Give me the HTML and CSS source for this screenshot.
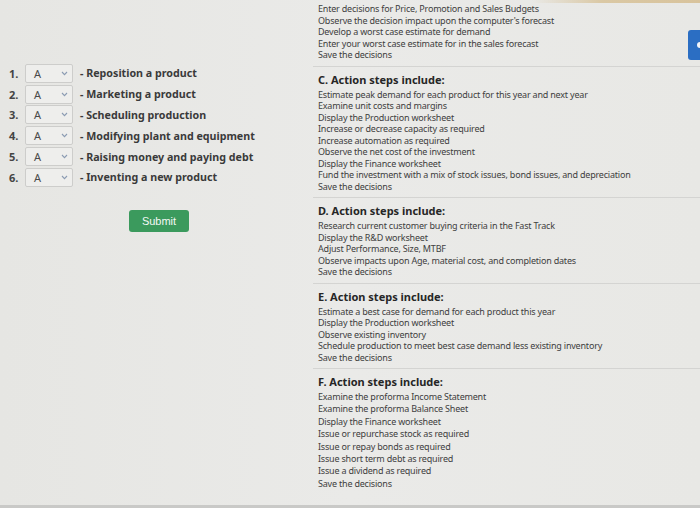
FILE: index.html
```html
<!DOCTYPE html>
<html lang="en">
<head>
<meta charset="utf-8">
<title>Action steps</title>
<link rel="stylesheet" href="styles.css">
</head>
<body>
<div class="page">
  <div class="top-strip"></div>
  <div class="main">
    <div class="left">
      <div class="rows">
        <div class="row"><span class="num">1.</span><span class="select"><span class="val">A</span><svg class="chev" width="7" height="5" viewBox="0 0 7 5"><path d="M1 1 L3.5 3.6 L6 1" fill="none" stroke="#8b9bb2" stroke-width="1.1"/></svg></span><span class="label">- Reposition a product</span></div>
        <div class="row"><span class="num">2.</span><span class="select"><span class="val">A</span><svg class="chev" width="7" height="5" viewBox="0 0 7 5"><path d="M1 1 L3.5 3.6 L6 1" fill="none" stroke="#8b9bb2" stroke-width="1.1"/></svg></span><span class="label">- Marketing a product</span></div>
        <div class="row"><span class="num">3.</span><span class="select"><span class="val">A</span><svg class="chev" width="7" height="5" viewBox="0 0 7 5"><path d="M1 1 L3.5 3.6 L6 1" fill="none" stroke="#8b9bb2" stroke-width="1.1"/></svg></span><span class="label">- Scheduling production</span></div>
        <div class="row"><span class="num">4.</span><span class="select"><span class="val">A</span><svg class="chev" width="7" height="5" viewBox="0 0 7 5"><path d="M1 1 L3.5 3.6 L6 1" fill="none" stroke="#8b9bb2" stroke-width="1.1"/></svg></span><span class="label">- Modifying plant and equipment</span></div>
        <div class="row"><span class="num">5.</span><span class="select"><span class="val">A</span><svg class="chev" width="7" height="5" viewBox="0 0 7 5"><path d="M1 1 L3.5 3.6 L6 1" fill="none" stroke="#8b9bb2" stroke-width="1.1"/></svg></span><span class="label">- Raising money and paying debt</span></div>
        <div class="row"><span class="num">6.</span><span class="select"><span class="val">A</span><svg class="chev" width="7" height="5" viewBox="0 0 7 5"><path d="M1 1 L3.5 3.6 L6 1" fill="none" stroke="#8b9bb2" stroke-width="1.1"/></svg></span><span class="label">- Inventing a new product</span></div>
      </div>
      <button class="submit" type="button">Submit</button>
    </div>
    <div class="right">
      <div class="section first">
        <div class="line">Enter decisions for Price, Promotion and Sales Budgets</div>
        <div class="line">Observe the decision impact upon the computer's forecast</div>
        <div class="line">Develop a worst case estimate for demand</div>
        <div class="line">Enter your worst case estimate for in the sales forecast</div>
        <div class="line">Save the decisions</div>
      </div>
      <div class="section">
        <div class="heading">C. Action steps include:</div>
        <div class="line">Estimate peak demand for each product for this year and next year</div>
        <div class="line">Examine unit costs and margins</div>
        <div class="line">Display the Production worksheet</div>
        <div class="line">Increase or decrease capacity as required</div>
        <div class="line">Increase automation as required</div>
        <div class="line">Observe the net cost of the investment</div>
        <div class="line">Display the Finance worksheet</div>
        <div class="line">Fund the investment with a mix of stock issues, bond issues, and depreciation</div>
        <div class="line">Save the decisions</div>
      </div>
      <div class="section">
        <div class="heading">D. Action steps include:</div>
        <div class="line">Research current customer buying criteria in the Fast Track</div>
        <div class="line">Display the R&amp;D worksheet</div>
        <div class="line">Adjust Performance, Size, MTBF</div>
        <div class="line">Observe impacts upon Age, material cost, and completion dates</div>
        <div class="line">Save the decisions</div>
      </div>
      <div class="section">
        <div class="heading">E. Action steps include:</div>
        <div class="line">Estimate a best case for demand for each product this year</div>
        <div class="line">Display the Production worksheet</div>
        <div class="line">Observe existing inventory</div>
        <div class="line">Schedule production to meet best case demand less existing inventory</div>
        <div class="line">Save the decisions</div>
      </div>
      <div class="section last">
        <div class="heading">F. Action steps include:</div>
        <div class="line">Examine the proforma Income Statement</div>
        <div class="line">Examine the proforma Balance Sheet</div>
        <div class="line">Display the Finance worksheet</div>
        <div class="line">Issue or repurchase stock as required</div>
        <div class="line">Issue or repay bonds as required</div>
        <div class="line">Issue short term debt as required</div>
        <div class="line">Issue a dividend as required</div>
        <div class="line">Save the decisions</div>
      </div>
    </div>
  </div>
  <div class="bottom-strip"></div>
  <div class="edge-tab"><span class="edge-dot"></span></div>
</div>
</body>
</html>
```
FILE: styles.css
```css
html, body {
  margin: 0;
  padding: 0;
}
body {
  background: #e8e8e5;
  font-family: "Noto Sans", "DejaVu Sans", sans-serif;
  color: #3c3c3c;
}
.page {
  position: relative;
  width: 700px;
  height: 508px;
  overflow: hidden;
  display: flex;
  flex-direction: column;
  background: linear-gradient(90deg, #e6e6e3 0%, #eaeae8 50%, #e8e8e5 100%);
}
.top-strip {
  height: 3px;
  flex: none;
  background: linear-gradient(90deg, rgba(0,0,0,0) 0%, rgba(0,0,0,0) 76%, #dac8a4 86%, #d8c39c 100%);
}
.main {
  flex: 1;
  display: grid;
  grid-template-columns: 310px 1fr;
}
.left {
  padding-top: 60px;
  padding-left: 9px;
}
.rows {
  display: flex;
  flex-direction: column;
}
.row {
  height: 20.8px;
  display: flex;
  align-items: center;
}
.num {
  width: 16px;
  font-weight: 700;
  font-size: 11px;
  color: #444;
}
.select {
  box-sizing: border-box;
  width: 48px;
  height: 19px;
  border: 1px solid #cdcdcb;
  border-radius: 2px;
  background: #eeeeec;
  display: flex;
  align-items: center;
  justify-content: space-between;
  padding: 0 4px 0 8px;
  margin-right: 7px;
}
.val {
  font-size: 11px;
  color: #4a4a4a;
}
.chev {
  display: block;
}
.label {
  font-size: 10.7px;
  font-weight: 700;
  color: #3a3a3a;
  white-space: nowrap;
}
.submit {
  margin-top: 22px;
  margin-left: 120px;
  width: 60px;
  height: 22px;
  border: none;
  border-radius: 3px;
  background: #3b9a5d;
  color: #f4f8f5;
  font-family: "Liberation Sans", Arial, sans-serif;
  font-size: 11px;
  padding: 0;
}
.right {
  padding-left: 3px;
}
.section {
  padding: 6px 0 5px 5px;
  border-bottom: 1px solid #d4d4d2;
}
.section.first {
  padding-top: 0;
}
.section.last {
  border-bottom: none;
}
.heading {
  font-size: 11px;
  font-weight: 700;
  line-height: 14px;
  margin-bottom: 2px;
  color: #262626;
}
.line {
  font-size: 9px;
  letter-spacing: -0.2px;
  line-height: 11.5px;
  white-space: nowrap;
  color: #404040;
}
.section.last .line {
  line-height: 12.4px;
}
.bottom-strip {
  height: 3px;
  flex: none;
  background: #c9c9c7;
}
.edge-tab {
  position: absolute;
  left: 688px;
  top: 30px;
  width: 16px;
  height: 30px;
  border-radius: 3px;
  background: #2b6ec3;
}
.edge-dot {
  position: absolute;
  left: 9px;
  top: 12px;
  width: 6px;
  height: 6px;
  border-radius: 50%;
  background: #f2f4f8;
}
```
